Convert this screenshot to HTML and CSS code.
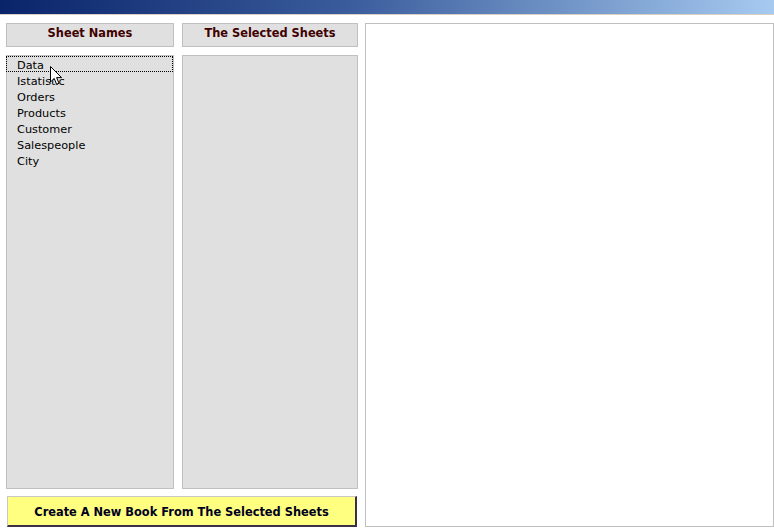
FILE: index.html
```html
<!DOCTYPE html>
<html>
<head>
<meta charset="utf-8">
<link rel="stylesheet" href="styles.css">
</head>
<body>
<div class="titlebar"></div>
<div class="main">
  <div class="left">
    <div class="hdr">Sheet Names</div>
    <div class="hdr">The Selected Sheets</div>
    <div class="list">
      <div class="item focus">Data</div>
      <div class="item">Istatistic</div>
      <div class="item">Orders</div>
      <div class="item">Products</div>
      <div class="item">Customer</div>
      <div class="item">Salespeople</div>
      <div class="item">City</div>
      <svg class="cursor" width="13" height="20" viewBox="0 0 13 20"><path d="M0.5 0.5 L0.5 16 L4.2 12.4 L6.6 18.3 L9 17.3 L6.6 11.6 L11.6 11.6 Z" fill="#fff" stroke="#000" stroke-width="1"/></svg>
    </div>
    <div class="list"></div>
    <div class="btn">Create A New Book From The Selected Sheets</div>
  </div>
  <div class="panel"></div>
</div>
</body>
</html>
```
FILE: styles.css
```css
html, body {
  margin: 0;
  padding: 0;
  background: #fff;
  overflow: hidden;
  font-family: "DejaVu Sans", Verdana, sans-serif;
  font-size: 11px;
}
.titlebar {
  height: 14px;
  background: linear-gradient(to right, #0a246a, #3a5c9c 45%, #a6caf0);
  border-bottom: 1px solid #d8d0c0;
}
.main {
  display: flex;
  padding: 8px 0 0 6px;
  gap: 7px;
}
.left {
  display: grid;
  grid-template-columns: 168px 176px;
  grid-template-rows: 24px 434px 30px;
  column-gap: 8px;
  row-gap: 8px;
}
.hdr {
  background: #e0e0e0;
  border: 1px solid #c0c0c0;
  box-sizing: border-box;
  text-align: center;
  font-weight: bold;
  color: #400000;
  line-height: 19px;
  font-size: 11.4px;
}
.list {
  position: relative;
  background: #e0e0e0;
  border: 1px solid #c0c0c0;
  box-sizing: border-box;
}
.item {
  height: 16px;
  line-height: 13px;
  padding-top: 3px;
  padding-left: 10px;
  font-size: 11.3px;
  color: #000;
  box-sizing: border-box;
}
.focus {
  outline: 1px dotted #000;
  outline-offset: -1px;
  margin-left: -1px;
  padding-left: 11px;
}
.cursor {
  position: absolute;
  left: 43px;
  top: 10px;
}
.btn {
  grid-column: 1 / 3;
  margin: -1px 1px 0 1px;
  background: #ffff80;
  border-top: 1px solid #c8c8c8;
  border-left: 1px solid #c8c8c8;
  border-right: 2px solid #3c3048;
  border-bottom: 2px solid #3c3048;
  box-sizing: border-box;
  text-align: center;
  font-weight: bold;
  font-size: 11.4px;
  color: #000020;
  padding-top: 4px;
  line-height: 23px;
}
.panel {
  width: 412px;
  height: 504px;
  border: 1px solid #c0c0c0;
  box-sizing: border-box;
  background: #fff;
}
```
